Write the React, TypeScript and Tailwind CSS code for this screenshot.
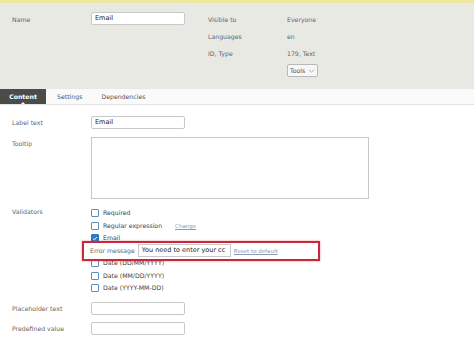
const font = { fontFamily: '"DejaVu Sans", Verdana, sans-serif' };

function Box({ checked }: { checked?: boolean }) {
  return (
    <span
      className={
        "inline-flex h-[8px] w-[8px] items-center justify-center rounded-[1px] border " +
        (checked ? "border-[#2b7bc4] bg-[#2b7bc4]" : "border-[#5f8fb8] bg-white")
      }
    >
      {checked && (
        <svg viewBox="0 0 8 8" className="h-[7px] w-[7px]">
          <path d="M1.5 4.2 L3.2 5.8 L6.5 2" stroke="white" strokeWidth="1.3" fill="none" />
        </svg>
      )}
    </span>
  );
}

function Check({ label, checked, extra }: { label: string; checked?: boolean; extra?: React.ReactNode }) {
  return (
    <div className="flex h-[12.5px] items-center gap-[4px]">
      <Box checked={checked} />
      <span className="text-[#444]">{label}</span>
      {extra}
    </div>
  );
}

function Input({ value }: { value?: string }) {
  return (
    <div className="h-[13px] w-[94px] rounded-[2px] border border-[#c8c8c8] bg-white px-[3px] text-[6.5px] leading-[11px] text-[#222]">
      {value}
    </div>
  );
}

function Row({ label, children, h }: { label: string; children: React.ReactNode; h: string }) {
  return (
    <div className={`flex ${h}`}>
      <div className="w-[91px] pl-[12px] pt-[3px] text-[#666]">{label}</div>
      <div>{children}</div>
    </div>
  );
}

export default function App() {
  return (
    <div className="h-[346px] w-[474px] overflow-hidden bg-white text-[6.2px] leading-[8px]" style={font}>
      <div className="h-[3px] bg-[#ece8a0]" />
      <div className="flex h-[86px] bg-[#e9e9e4] pt-[9px]">
        <div className="flex w-[208px] items-start">
          <div className="w-[91px] pl-[12px] pt-[4px] text-[#666]">Name</div>
          <Input value="Email" />
        </div>
        <div className="flex flex-col gap-[9px] pt-[4px] text-[#666]">
          <div className="flex"><span className="w-[79px]">Visible to</span><span>Everyone</span></div>
          <div className="flex"><span className="w-[79px]">Languages</span><span>en</span></div>
          <div className="flex"><span className="w-[79px]">ID, Type</span><span>179, Text</span></div>
          <div className="flex">
            <span className="w-[79px]" />
            <span className="-mt-[3px] flex h-[13px] items-center gap-[3px] rounded-[2px] border border-[#b8b8b8] bg-[#f7f7f7] px-[2px] text-[#555]">
              Tools
              <svg viewBox="0 0 8 5" className="h-[4px] w-[7px]"><path d="M1 1 L4 4 L7 1" stroke="#999" fill="none" /></svg>
            </span>
          </div>
        </div>
      </div>
      <div className="flex h-[16px] items-stretch border-b border-[#e2e2e2] bg-[#fafafa]">
        <div className="relative flex w-[46px] items-center justify-center bg-[#4b4b4b] font-bold text-white">
          Content
          <span className="absolute bottom-0 left-[23px] h-0 w-0 -translate-x-1/2 border-x-[2px] border-b-[2px] border-x-transparent border-b-white" />
        </div>
        <div className="flex items-center pl-[11px] text-[#555]">Settings</div>
        <div className="flex items-center pl-[19px] text-[#555]">Dependencies</div>
      </div>
      <div className="pt-[11px]">
        <Row label="Label text" h="h-[21px]"><Input value="Email" /></Row>
        <Row label="Tooltip" h="h-[69px]">
          <div className="h-[62px] w-[278px] border border-[#c8c8c8] bg-white" />
        </Row>
        <div className="flex">
          <div className="w-[91px] pl-[12px] pt-[2px] text-[#666]">Validators</div>
          <div className="pt-[1px]">
            <Check label="Required" />
            <Check label="Regular expression" extra={<span className="ml-[9px] text-[5.5px] text-[#8a9bb0] underline">Change</span>} />
            <Check label="Email" checked />
            <div className="relative -ml-[1px] flex h-[12.5px] items-center gap-[3px]">
              <span className="text-[#666]">Error message</span>
              <div className="h-[13px] w-[93px] overflow-hidden whitespace-nowrap border border-[#c8c8c8] bg-white px-[3px] text-[6.5px] leading-[11px] text-[#222]">
                You need to enter your cc
              </div>
              <span className="text-[5.5px] text-[#8a9bb0] underline">Reset to default</span>
              <div className="pointer-events-none absolute -top-[4px] -bottom-[4px] -left-[8px] w-[238px] border-2 border-[#c9283a] shadow-[0_0_2px_rgba(200,40,60,0.5)]" />
            </div>
            <Check label="Date (DD/MM/YYYY)" />
            <Check label="Date (MM/DD/YYYY)" />
            <Check label="Date (YYYY-MM-DD)" />
          </div>
        </div>
        <div className="pt-[7px]">
          <Row label="Placeholder text" h="h-[20px]"><Input /></Row>
          <Row label="Predefined value" h="h-[20px]"><Input /></Row>
        </div>
      </div>
    </div>
  );
}
